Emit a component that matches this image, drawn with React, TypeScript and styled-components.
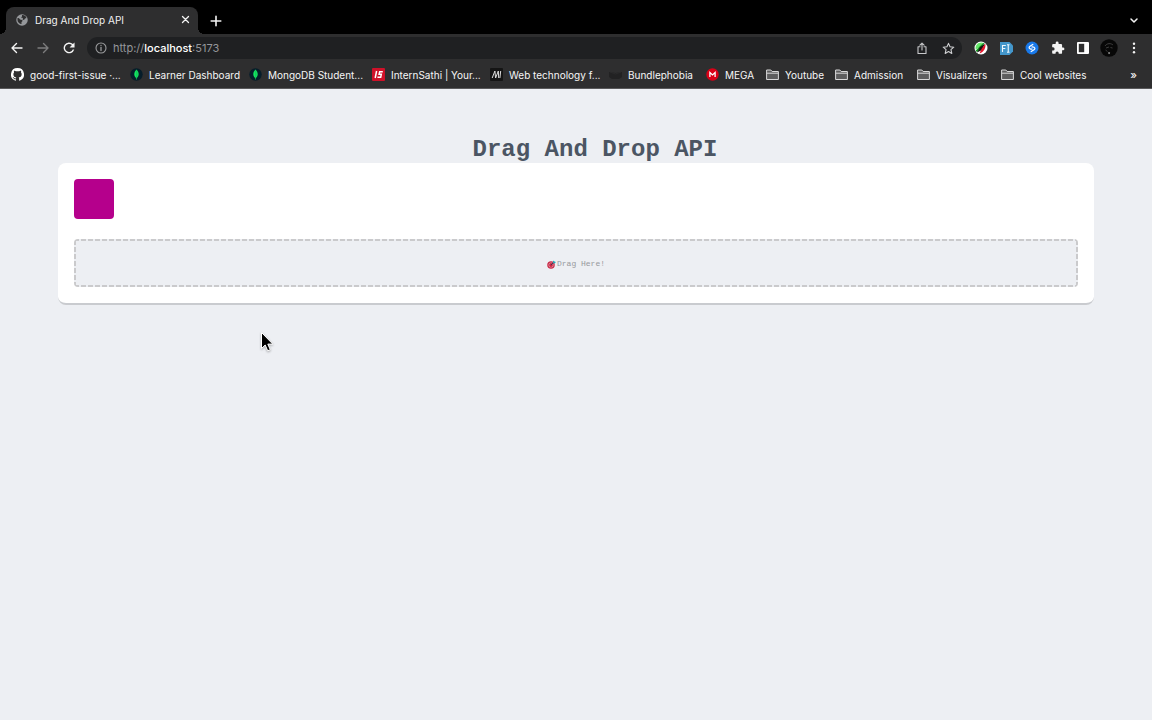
import React from "react";
import styled, { createGlobalStyle, css } from "styled-components";

const GlobalStyle = createGlobalStyle`
  *, *::before, *::after { box-sizing: border-box; }
  body {
    margin: 0;
    background: #edeff3;
    font-family: Inter, "Liberation Sans", sans-serif;
    font-size: 11px;
  }
  svg { display: block; flex: none; }
`;

const Browser = styled.div`
  color: #f1f1f1;
`;

const TabStrip = styled.div`
  display: flex;
  align-items: flex-end;
  height: 34px;
  padding: 0 8px 0 6px;
  background: #000;
`;

const Tab = styled.div`
  position: relative;
  display: flex;
  align-items: center;
  width: 192px;
  height: 27px;
  padding: 0 5px 2px 10px;
  background: #2e2e2f;
  border-radius: 8px 8px 0 0;
  &::before, &::after {
    content: "";
    position: absolute;
    bottom: 0;
    width: 6px;
    height: 6px;
  }
  &::before {
    right: 100%;
    background: radial-gradient(circle at 0 0, #000 6px, #2e2e2f 6px);
  }
  &::after {
    left: 100%;
    background: radial-gradient(circle at 100% 0, #000 6px, #2e2e2f 6px);
  }
`;

const TabTitle = styled.span`
  flex: 1;
  margin-left: 7px;
  font-size: 10px;
  white-space: nowrap;
`;

const IconButton = styled.button<{ $width?: number; $dim?: boolean }>`
  display: flex;
  align-items: center;
  justify-content: center;
  width: ${(p) => p.$width ?? 26}px;
  height: 26px;
  padding: 0;
  border: 0;
  background: none;
  color: ${(p) => (p.$dim ? "#7c7c7d" : "#f4f4f4")};
`;

const Spacer = styled.div`
  flex: 1;
`;

const Toolbar = styled.div`
  display: flex;
  align-items: center;
  height: 28px;
  padding: 0 5px 0 4px;
  background: #2e2e2f;
`;

const AddressBar = styled.div`
  display: flex;
  flex: 1;
  align-items: center;
  height: 22px;
  margin: 0 6px 0 5px;
  padding: 0 1px 0 8px;
  border-radius: 11px;
  background: #1f2022;
  color: #9a9b9d;
`;

const Address = styled.a`
  flex: 1;
  margin-left: 6px;
  color: #94969a;
  font-size: 11px;
  text-decoration: none;
  b { color: #fff; font-weight: 500; }
`;

const Extensions = styled.div`
  display: flex;
  width: 179px;
  button { flex: 1; }
`;

const BookmarkBar = styled.nav`
  display: flex;
  align-items: center;
  height: 27px;
  padding: 0 15px 1px 11px;
  background: #2e2e2f;
  border-bottom: 1px solid #59595b;
`;

const Bookmark = styled.a<{ $width: number }>`
  display: flex;
  flex: none;
  align-items: center;
  gap: 6px;
  width: ${(p) => p.$width}px;
  color: #f6f6f6;
  font-size: 10px;
  text-decoration: none;
  white-space: nowrap;
`;

const More = styled.button`
  margin-left: auto;
  padding: 0;
  border: 0;
  background: none;
  color: #f1f1f1;
  font: 500 11px/14px Inter, sans-serif;
`;

const Main = styled.main`
  width: 90%;
  margin: 0 auto;
  padding: 48px 0;
  font-family: "Courier New", "Liberation Mono", monospace;
`;

const Heading = styled.h1`
  margin: 0;
  padding-left: 38px;
  color: #4b5563;
  font-size: 24px;
  font-weight: 700;
  line-height: 26px;
  text-align: center;
`;

const Card = styled.section`
  display: flex;
  flex-direction: column;
  gap: 20px;
  padding: 16px;
  border-bottom: 2px solid #c9cbcf;
  border-radius: 8px;
  background: #fff;
`;

const Block = styled.div`
  width: 40px;
  height: 40px;
  border-radius: 4px;
  background: #b5008c;
`;

const dash = css`#cacacc 0 5px, #edeff3 5px 7px`;

const DropZone = styled.div`
  display: flex;
  align-items: center;
  justify-content: center;
  gap: 1px;
  height: 48px;
  padding-top: 2px;
  border-radius: 4px;
  background:
    repeating-linear-gradient(90deg, ${dash}) top / 100% 2px no-repeat,
    repeating-linear-gradient(90deg, ${dash}) bottom / 100% 2px no-repeat,
    repeating-linear-gradient(0deg, ${dash}) left / 2px 100% no-repeat,
    repeating-linear-gradient(0deg, ${dash}) right / 2px 100% no-repeat,
    #edeff3;
  color: #97999d;
  font-size: 8px;
  line-height: 12px;
`;

const Pointer = styled.svg`
  position: absolute;
  top: 330px;
  left: 258px;
  filter: drop-shadow(0 1px 1px rgba(0, 0, 0, 0.3));
`;

const line = { fill: "none", stroke: "currentColor", strokeLinecap: "round", strokeLinejoin: "round" } as const;

const Globe = () => (
  <svg width="12" height="12" viewBox="0 0 24 24">
    <circle cx="12" cy="12" r="11.5" fill="#96989b" />
    <path d="M3 8c3 0 4 1 5 3l4 1c2 1 1 3-1 4v4c-4 0-8-4-8-8zM12 2c4-.5 8 2 9 6l-3 1-2 3-3-1 1-3-4-1 2-2z" fill="#2e2e2f" />
  </svg>
);
const Close = () => (
  <svg width="9" height="9" viewBox="0 0 9 9" {...line} strokeWidth="1.3"><path d="M1.5 1.5l6 6M7.5 1.5l-6 6" /></svg>
);
const Plus = () => (
  <svg width="12" height="12" viewBox="0 0 12 12" {...line} strokeWidth="1.6"><path d="M6 1.2v9.6M1.2 6h9.6" /></svg>
);
const Chevron = () => (
  <svg width="10" height="10" viewBox="0 0 10 10" {...line} strokeWidth="1.5"><path d="M2 3l3 3 3-3" /></svg>
);
const Arrow = ({ flip }: { flip?: boolean }) => (
  <svg width="12" height="12" viewBox="0 0 12 12" {...line} strokeWidth="1.4">
    <path d={flip ? "M1 6h10M6.5 1.5L11 6l-4.5 4.5" : "M11 6H1M5.5 1.5L1 6l4.5 4.5"} />
  </svg>
);
const Reload = () => (
  <svg width="14" height="14" viewBox="0 0 24 24" fill="currentColor">
    <path d="M18.7 5.3A9.3 9.3 0 1 0 21 14.6h-2.6A6.9 6.9 0 1 1 17 7l-4 4h8.5V2.5z" />
  </svg>
);
const Info = () => (
  <svg width="12" height="12" viewBox="0 0 12 12" {...line} strokeWidth="1.1">
    <circle cx="6" cy="6" r="5" /><path d="M6 5.5v3" strokeWidth="1.3" /><path d="M6 3.4v.1" strokeWidth="1.3" />
  </svg>
);
const Share = () => (
  <svg width="12" height="13" viewBox="0 0 12 13" {...line} strokeWidth="1.1" color="#c7c8ca">
    <path d="M4 4.800H2v6.700h8V4.800H8M6 8V1.200M3.900 3.200L6 1.100l2.100 2.100" />
  </svg>
);
const Star = () => (
  <svg width="13" height="13" viewBox="0 0 24 24" {...line} strokeWidth="2" color="#d0d1d3">
    <path d="M12 2.500l2.800 6.400 7 .7-5.300 4.600 1.600 6.900-6.100-3.700-6.100 3.700 1.600-6.900-5.300-4.600 7-.7z" />
  </svg>
);
const ColorWheel = () => (
  <svg width="14" height="14" viewBox="0 0 14 14">
    <circle cx="7" cy="7" r="6.5" fill="#fff" />
    <path d="M1.600 8.500C1 4 4 1.200 8.500 1.600L6 6z" fill="#62e868" />
    <path d="M1.800 9.500L9 1.700l1.500.8L3 11.300z" fill="#159b22" />
    <path d="M3 11.500L6 6l5-3.500L8 9z" fill="#14130f" />
    <path d="M11.200 2.800c1 3-.8 8.200-5.700 9.700L7.500 8z" fill="#e3182d" />
  </svg>
);
const FontTool = () => (
  <svg width="13" height="13" viewBox="0 0 13 13">
    <path d="M0 0h9.500L13 3.500v6L9.500 13H0z" fill="#4396cb" />
    <path d="M2.500 10V3.500h3.300M2.500 6.500h2.800M7 2.700h2.500M7 10.300h2.500M8.250 2.700v7.600" fill="none" stroke="#eef8ff" strokeWidth="1.1" />
  </svg>
);
const Shazam = () => (
  <svg width="14" height="14" viewBox="0 0 14 14" {...line} strokeWidth="1.2" color="#fff">
    <circle cx="7" cy="7" r="6.5" fill="#1878e9" stroke="none" />
    <path d="M7.800 3.400L5 5.200C3.800 6 3.900 7 4.800 7.600S6.200 8.600 7 8M6.200 10.600L9 8.800c1.200-.8 1.100-1.800.2-2.400S7.800 5.400 7 6" />
  </svg>
);
const Puzzle = () => (
  <svg width="14" height="14" viewBox="0 0 24 24" fill="currentColor">
    <path d="M20.500 11H19V7a2 2 0 0 0-2-2h-4V3.500a2.500 2.500 0 0 0-5 0V5H4a2 2 0 0 0-2 2v3.800h1.500a2.700 2.700 0 0 1 0 5.400H2V20c0 1.100.9 2 2 2h3.800v-1.500a2.700 2.700 0 0 1 5.400 0V22H17a2 2 0 0 0 2-2v-4h1.500a2.500 2.500 0 0 0 0-5z" />
  </svg>
);
const SidePanel = () => (
  <svg width="12" height="12" viewBox="0 0 12 12">
    <rect width="12" height="12" rx="1" fill="#fff" /><rect x="1.800" y="1.800" width="5.400" height="8.400" fill="#2e2e2f" />
  </svg>
);
const Avatar = () => (
  <svg width="18" height="18" viewBox="0 0 18 18">
    <circle cx="9" cy="9" r="8.700" fill="#070707" />
    <path d="M5 7c2-3 6-3 8-1M6 9l3-1M10.500 8.500l2 .5M5.500 11l2 1.500" stroke="#3c3c3c" strokeWidth="1" fill="none" />
    <path d="M8 13.500h2.200L9 15.200z" fill="#ddd" />
  </svg>
);
const Dots = () => (
  <svg width="12" height="12" viewBox="0 0 12 12" fill="currentColor">
    <circle cx="6" cy="1.800" r="1.200" /><circle cx="6" cy="6" r="1.200" /><circle cx="6" cy="10.200" r="1.200" />
  </svg>
);
const Github = () => (
  <svg width="13" height="13" viewBox="0 0 16 16" fill="#fff">
    <path d="M8 0a8 8 0 0 0-2.530 15.590c.4.070.550-.170.550-.380v-1.490c-2.010.370-2.530-.490-2.690-.940-.090-.230-.480-.940-.820-1.130-.280-.150-.680-.520-.010-.530.630-.010 1.080.580 1.230.820.720 1.210 1.870.870 2.330.660.070-.520.280-.870.510-1.070-1.780-.200-3.640-.890-3.640-3.950 0-.870.310-1.590.820-2.150-.080-.200-.360-1.020.080-2.120 0 0 .670-.210 2.200.820a7.600 7.600 0 0 1 4 0c1.530-1.040 2.200-.820 2.200-.820.440 1.100.160 1.920.080 2.120.510.560.820 1.270.820 2.150 0 3.070-1.870 3.750-3.650 3.950.290.250.540.730.540 1.480v2.200c0 .210.150.460.550.380A8 8 0 0 0 8 0z" />
  </svg>
);
const Leaf = () => (
  <svg width="13" height="13" viewBox="0 0 13 13">
    <circle cx="6.5" cy="6.5" r="6.200" fill="#061d2a" />
    <path d="M6.500 1.500c3 3 2.800 6.600.3 8.500l-.1 1.500h-.4L6.200 10c-2.500-1.900-2.700-5.500.3-8.500z" fill="#13e562" />
    <path d="M6.500 1.500c1.200 3 1.200 6 .3 8.500l-.1 1.500h-.3z" fill="#0fb853" />
  </svg>
);
const InternSathi = () => (
  <svg width="13" height="13" viewBox="0 0 13 13">
    <rect width="13" height="13" rx="1" fill="#cf1129" />
    <path d="M4.600 3L3.200 10M10.800 3.700H7.700L7.100 6.300H9.300L8.700 9.300H5.400" fill="none" stroke="#fff" strokeWidth="1.500" />
  </svg>
);
const Mdn = () => (
  <svg width="13" height="13" viewBox="0 0 13 13">
    <rect width="13" height="13" rx="1" fill="#151515" />
    <path d="M2.200 10L4.900 3L5.600 10L8.300 3L8.700 10M10.700 3L9.900 10" fill="none" stroke="#dcdcdc" strokeWidth="1" />
  </svg>
);
const Bundle = () => (
  <svg width="13" height="13" viewBox="0 0 13 13">
    <path d="M0 4l6.500 1L13 4v5l-3 2H3L0 9z" fill="#222223" /><path d="M1 4l5.500 2L12 4" stroke="#2b2b2c" fill="none" />
  </svg>
);
const Mega = () => (
  <svg width="13" height="13" viewBox="0 0 13 13">
    <circle cx="6.500" cy="6.500" r="6.200" fill="#d90017" />
    <path d="M3.900 9V4.500l2.600 2.400 2.600-2.400V9" fill="none" stroke="#fff" strokeWidth="1.300" />
  </svg>
);
const Folder = () => (
  <svg width="13" height="13" viewBox="0 0 13 13">
    <path d="M.6 11.500V2h4.200l1.300 1.500h6.300v8z" fill="#5d5d5e" stroke="#d8d8d9" strokeWidth="1" /><path d="M.6 5.200h11.800" stroke="#d8d8d9" />
  </svg>
);
const Dart = () => (
  <svg width="9" height="9" viewBox="0 0 18 18">
    <circle cx="8" cy="10" r="7.500" fill="#c92845" /><circle cx="8" cy="10" r="5" fill="#e0a9b5" />
    <circle cx="8" cy="10" r="3.800" fill="#ce2440" />
    <path d="M8 10l6-6" stroke="#244456" strokeWidth="1.800" /><path d="M11.500 6l1-5 2.500 2 3 1-3 3z" fill="#28a9b4" />
  </svg>
);

const bookmarks: { label: string; width: number; Icon: () => React.ReactElement }[] = [
  { label: "good-first-issue ·...", width: 119, Icon: Github },
  { label: "Learner Dashboard", width: 119, Icon: Leaf },
  { label: "MongoDB Student...", width: 123, Icon: Leaf },
  { label: "InternSathi | Your...", width: 118, Icon: InternSathi },
  { label: "Web technology f...", width: 119, Icon: Mdn },
  { label: "Bundlephobia", width: 97, Icon: Bundle },
  { label: "MEGA", width: 60, Icon: Mega },
  { label: "Youtube", width: 69, Icon: Folder },
  { label: "Admission", width: 82, Icon: Folder },
  { label: "Visualizers", width: 84, Icon: Folder },
  { label: "Cool websites", width: 84, Icon: Folder },
];

const extensions = [
  { label: "Color picker", Icon: ColorWheel },
  { label: "Font finder", Icon: FontTool },
  { label: "Shazam", Icon: Shazam },
  { label: "Extensions", Icon: Puzzle },
  { label: "Side panel", Icon: SidePanel },
  { label: "Profile", Icon: Avatar },
  { label: "Menu", Icon: Dots },
];

export default function App() {
  return (
    <>
      <GlobalStyle />
      <Browser>
        <TabStrip>
          <Tab>
            <Globe />
            <TabTitle>Drag And Drop API</TabTitle>
            <IconButton $width={16} aria-label="Close tab"><Close /></IconButton>
          </Tab>
          <IconButton $width={36} aria-label="New tab"><Plus /></IconButton>
          <Spacer />
          <IconButton $width={20} aria-label="Search tabs"><Chevron /></IconButton>
        </TabStrip>
        <Toolbar>
          <IconButton aria-label="Back"><Arrow /></IconButton>
          <IconButton $dim aria-label="Forward"><Arrow flip /></IconButton>
          <IconButton aria-label="Reload"><Reload /></IconButton>
          <AddressBar>
            <Info />
            <Address href="#">http://<b>localhost</b>:5173</Address>
            <IconButton aria-label="Share"><Share /></IconButton>
            <IconButton aria-label="Bookmark this page"><Star /></IconButton>
          </AddressBar>
          <Extensions>
            {extensions.map(({ label, Icon }) => (
              <IconButton key={label} aria-label={label}><Icon /></IconButton>
            ))}
          </Extensions>
        </Toolbar>
        <BookmarkBar>
          {bookmarks.map(({ label, width, Icon }) => (
            <Bookmark key={label} href="#" $width={width}><Icon />{label}</Bookmark>
          ))}
          <More aria-label="More bookmarks">»</More>
        </BookmarkBar>
      </Browser>
      <Main>
        <Heading>Drag And Drop API</Heading>
        <Card>
          <Block draggable />
          <DropZone><Dart />Drag Here!</DropZone>
        </Card>
      </Main>
      <Pointer width="16" height="24" viewBox="0 0 16 24" aria-hidden="true">
        <path d="M3.500 2.500v16l3.700-3.500 2.500 5.800 2.600-1.100-2.500-5.600h5z" fill="#000" stroke="#fff" strokeWidth="1" />
      </Pointer>
    </>
  );
}
